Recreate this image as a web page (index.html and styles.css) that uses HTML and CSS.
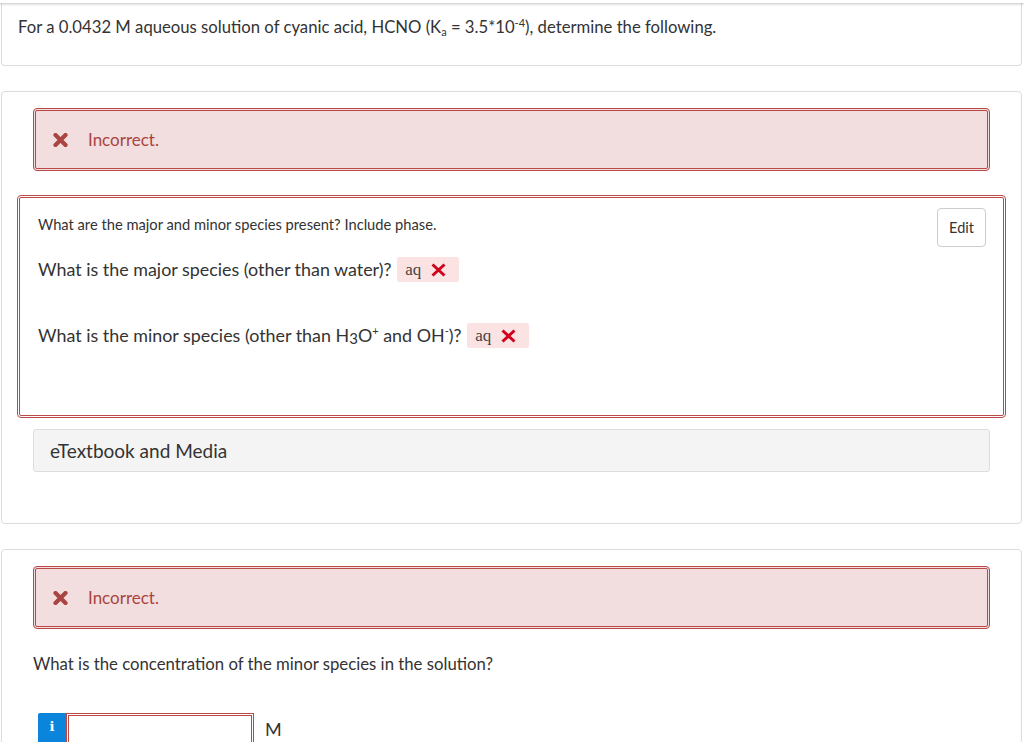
FILE: index.html
```html
<!DOCTYPE html>
<html>
<head>
<meta charset="utf-8">
<link rel="stylesheet" href="styles.css">
</head>
<body>
<div class="topbar"></div>
<div class="card intro">
  For a 0.0432 M aqueous solution of cyanic acid, HCNO (K<sub>a</sub> = 3.5*10<sup>-4</sup>), determine the following.
</div>

<div class="card part">
  <div class="alert">
    <svg class="xicon" width="15" height="14" viewBox="0 0 15 14"><path d="M2.5 2 L12.5 12 M12.5 2 L2.5 12" stroke="#a94442" stroke-width="4.2" stroke-linecap="round"/></svg>
    <span>Incorrect.</span>
  </div>
  <div class="question">
    <div class="qhead">
      <p class="prompt">What are the major and minor species present? Include phase.</p>
      <button class="edit">Edit</button>
    </div>
    <p class="line">What is the major species (other than water)? <span class="pill"><span class="aq">aq</span><svg width="15" height="14" viewBox="0 0 15 14"><path d="M1.5 1.5 L13.5 12.5 M13.5 1.5 L1.5 12.5" stroke="#d0021b" stroke-width="3"/></svg></span></p>
    <p class="line second">What is the minor species (other than H<sub>3</sub>O<sup>+</sup> and OH<sup>-</sup>)? <span class="pill"><span class="aq">aq</span><svg width="15" height="14" viewBox="0 0 15 14"><path d="M1.5 1.5 L13.5 12.5 M13.5 1.5 L1.5 12.5" stroke="#d0021b" stroke-width="3"/></svg></span></p>
  </div>
  <div class="media">eTextbook and Media</div>
</div>

<div class="card part last">
  <div class="alert">
    <svg class="xicon" width="15" height="14" viewBox="0 0 15 14"><path d="M2.5 2 L12.5 12 M12.5 2 L2.5 12" stroke="#a94442" stroke-width="4.2" stroke-linecap="round"/></svg>
    <span>Incorrect.</span>
  </div>
  <p class="conc">What is the concentration of the minor species in the solution?</p>
  <div class="answer">
    <span class="info">i</span>
    <span class="input"></span>
    <span class="unit">M</span>
  </div>
</div>
</body>
</html>
```

FILE: styles.css
```css
* { box-sizing: border-box; }
html, body { margin: 0; padding: 0; background: #fff; }
body {
  font-family: Lato, "Open Sans", sans-serif;
  color: #333;
  width: 1024px;
  overflow: hidden;
}
.topbar {
  height: 3px;
  background: #fff;
  box-shadow: 0 1px 3px rgba(0,0,0,0.25);
  position: relative;
  z-index: 2;
}
.card {
  margin: 0 2px 0 1px;
  border: 1px solid #dcdcdc;
  border-radius: 4px;
  background: #fff;
}
.intro {
  height: 63px;
  padding: 14px 16px;
  font-size: 16.7px;
  line-height: 20px;
  color: #333;
  border-top: none;
  border-radius: 0 0 4px 4px;
}
.intro sub { font-size: 11px; vertical-align: -3px; line-height: 0; }
.intro sup { font-size: 11px; vertical-align: 6px; line-height: 0; }
.part {
  margin-top: 25px;
  padding: 16px 31px 50px 31px;
  height: 433px;
}
.part.last { height: 300px; padding-bottom: 0; }
.alert {
  height: 63px;
  border: 3px double #b94a48;
  border-radius: 4px;
  background: #f2dede;
  display: flex;
  align-items: center;
  padding-left: 17px;
  color: #a94442;
  font-size: 17px;
}
.alert .xicon { margin-right: 20px; }
.question {
  margin: 24px -16px 0 -16px;
  height: 223px;
  border: 3px double #b94a48;
  border-radius: 4px;
  padding: 10px 17px 0 18px;
}
.qhead {
  display: flex;
  justify-content: space-between;
  align-items: flex-start;
}
.prompt {
  margin: 7px 0 0 0;
  font-size: 14.7px;
  line-height: 18px;
  color: #333;
}
.edit {
  width: 49px;
  height: 39px;
  border: 1px solid #ccc;
  border-radius: 4px;
  background: #fff;
  font-family: Lato, sans-serif;
  font-size: 14.5px;
  color: #333;
  padding: 0;
}
.line {
  margin: 10px 0 0 0;
  font-size: 17.9px;
  line-height: 25px;
  height: 25px;
  color: #333;
  white-space: nowrap;
}
.line.second { margin-top: 41px; }
.line sub { font-size: 15px; vertical-align: -2px; line-height: 0; }
.line sup { font-size: 11px; vertical-align: 7px; line-height: 0; }
.pill {
  display: inline-flex;
  align-items: center;
  vertical-align: top;
  height: 25px;
  width: 62px;
  margin-left: 1px;
  padding-left: 8px;
  background: #fbe3e4;
  border-radius: 2px;
}
.aq {
  font-family: "Liberation Serif", "Times New Roman", serif;
  font-size: 17px;
  color: #444;
  margin-right: 10px;
  margin-top: -1px;
}
.media {
  margin-top: 11px;
  height: 43px;
  background: #f4f4f4;
  border: 1px solid #ddd;
  border-radius: 3px;
  padding-left: 16px;
  display: flex;
  align-items: center;
  font-size: 19px;
  color: #333;
}
.conc {
  margin: 25px 0 0 0;
  font-size: 16.75px;
  line-height: 20px;
  color: #333;
}
.answer {
  margin-top: 39px;
  margin-left: 5px;
  display: flex;
  align-items: flex-start;
}
.info {
  width: 28px;
  height: 32px;
  background: #0b84db;
  color: #fff;
  font-family: "DejaVu Serif", serif;
  font-weight: bold;
  font-size: 13px;
  display: flex;
  justify-content: center;
  padding-top: 6px;
  border-radius: 2px 0 0 0;
}
.input {
  width: 188px;
  height: 40px;
  border: 3px double #b94a48;
  border-bottom: none;
  background: #fff;
}
.unit {
  margin-left: 11px;
  margin-top: 5px;
  font-size: 18px;
  color: #333;
}
```
